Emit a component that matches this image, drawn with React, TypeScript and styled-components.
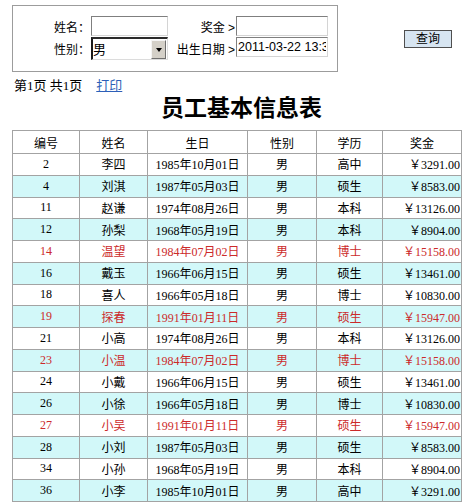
import React from "react";
import styled, { createGlobalStyle } from "styled-components";

const GlobalStyle = createGlobalStyle`
  html, body { margin: 0; padding: 0; background: #ffffff; }
  body { font-family: "Liberation Serif", "Noto Sans CJK SC", serif; color: #000; }
`;

const SANS = `"Liberation Sans", "Noto Sans CJK SC", sans-serif`;
const SERIF = `"Liberation Serif", "Noto Sans CJK SC", serif`;

const Page = styled.div`
  width: 474px;
  height: 504px;
  overflow: hidden;
`;

const TopBar = styled.div`
  display: flex;
  align-items: center;
  padding: 5px 0 0 12px;
`;

const SearchBox = styled.form`
  box-sizing: border-box;
  width: 326px;
  height: 67px;
  border: 1px solid #9c9c9c;
  padding: 10px 9px 0 0;
  display: grid;
  grid-template-columns: 78px 77px 68px 92px;
  grid-template-rows: 21px 23px;
  align-content: start;
  margin: 0;
`;

const Label = styled.label`
  font-family: ${SANS};
  font-size: 12px;
  display: flex;
  align-items: center;
  justify-content: flex-end;
  padding-right: 1px;
  white-space: nowrap;
`;

const TextInput = styled.input`
  box-sizing: border-box;
  width: 100%;
  height: 20px;
  margin: 0;
  padding: 0 1px;
  font-family: ${SANS};
  font-size: 12.5px;
  color: #000;
  background: #fff;
  border-style: solid;
  border-width: 1px;
  border-color: #7f7f7f #d4d4d4 #d4d4d4 #7f7f7f;
  outline: none;
  align-self: start;
`;

const SelectWrap = styled.div`
  box-sizing: border-box;
  width: 77px;
  height: 23px;
  display: flex;
  align-items: stretch;
  border-style: solid;
  border-width: 2px 1px 1px 2px;
  border-color: #2a2a2a #dcdcdc #dcdcdc #1a1a1a;
  background: #fff;
`;

const NativeSelect = styled.select`
  flex: 1;
  min-width: 0;
  appearance: none;
  -webkit-appearance: none;
  border: none;
  background: transparent;
  margin: 0;
  padding: 0;
  font-family: ${SANS};
  font-size: 13px;
  color: #000;
  outline: none;
`;

const ArrowButton = styled.span`
  box-sizing: border-box;
  width: 15px;
  margin: 1px 1px 0 0;
  background: #d4d0c8;
  border-style: solid;
  border-width: 1px;
  border-color: #f4f4f4 #6f6f6f #6f6f6f #f4f4f4;
  display: flex;
  align-items: center;
  justify-content: center;
  &::after {
    content: "";
    border-left: 3.5px solid transparent;
    border-right: 3.5px solid transparent;
    border-top: 4px solid #000;
  }
`;

const QueryButton = styled.button`
  box-sizing: border-box;
  width: 48px;
  height: 18px;
  margin: 0 0 0 66px;
  padding: 0;
  background: #d7e5f1;
  border: 1px solid #4f4f4f;
  font-family: ${SANS};
  font-size: 12px;
  line-height: 16px;
  color: #000;
`;

const Pager = styled.div`
  margin: 6px 0 0 14px;
  font-family: ${SERIF};
  font-size: 13px;
  line-height: 16px;
  white-space: pre;
`;

const PrintLink = styled.a`
  margin-left: 14px;
  color: #2d5fb8;
  text-decoration: underline;
`;

const Title = styled.h1`
  margin: 1px 0 9px 0;
  padding-left: 9px;
  text-align: center;
  font-family: ${SANS};
  font-size: 23px;
  font-weight: bold;
  line-height: 26px;
`;

const Table = styled.table`
  margin-left: 12px;
  width: 449px;
  border-collapse: collapse;
  table-layout: fixed;
  border: 1px solid #8c8c8c;
`;

const HeadCell = styled.th`
  height: 22px;
  padding: 0;
  border: 1px solid #a3a3a3;
  font-family: ${SANS};
  font-size: 12px;
  font-weight: normal;
  text-align: center;
  background: #fff;
`;

const Row = styled.tr<{ $alt: boolean; $warn: boolean }>`
  height: 21.75px;
  background: ${(p) => (p.$alt ? "#d2f8f9" : "#ffffff")};
  color: ${(p) => (p.$warn ? "#cc2a2a" : "#000")};
`;

const Cell = styled.td<{ $right?: boolean }>`
  padding: 0 ${(p) => (p.$right ? "1px" : "0")} 0 0;
  border: 1px solid #a3a3a3;
  font-family: ${SERIF};
  font-size: 12px;
  text-align: ${(p) => (p.$right ? "right" : "center")};
  white-space: nowrap;
  overflow: hidden;
`;

type Emp = [number, string, string, string, string, string, boolean];

const data: Emp[] = [
  [2, "李四", "1985年10月01日", "男", "高中", "3291.00", false],
  [4, "刘淇", "1987年05月03日", "男", "硕生", "8583.00", false],
  [11, "赵谦", "1974年08月26日", "男", "本科", "13126.00", false],
  [12, "孙梨", "1968年05月19日", "男", "本科", "8904.00", false],
  [14, "温望", "1984年07月02日", "男", "博士", "15158.00", true],
  [16, "戴玉", "1966年06月15日", "男", "硕生", "13461.00", false],
  [18, "喜人", "1966年05月18日", "男", "博士", "10830.00", false],
  [19, "探春", "1991年01月11日", "男", "硕生", "15947.00", true],
  [21, "小高", "1974年08月26日", "男", "本科", "13126.00", false],
  [23, "小温", "1984年07月02日", "男", "博士", "15158.00", true],
  [24, "小戴", "1966年06月15日", "男", "硕生", "13461.00", false],
  [26, "小徐", "1966年05月18日", "男", "博士", "10830.00", false],
  [27, "小吴", "1991年01月11日", "男", "硕生", "15947.00", true],
  [28, "小刘", "1987年05月03日", "男", "硕生", "8583.00", false],
  [34, "小孙", "1968年05月19日", "男", "本科", "8904.00", false],
  [36, "小李", "1985年10月01日", "男", "高中", "3291.00", false],
];

const colWidths = [67, 68, 100, 69, 66, 79];
const headers = ["编号", "姓名", "生日", "性别", "学历", "奖金"];

export default function App() {
  return (
    <Page>
      <GlobalStyle />
      <TopBar>
        <SearchBox onSubmit={(e) => e.preventDefault()}>
          <Label htmlFor="name">姓名：</Label>
          <TextInput id="name" />
          <Label htmlFor="bonus">奖金 &gt;</Label>
          <TextInput id="bonus" />
          <Label htmlFor="sex">性别：</Label>
          <SelectWrap>
            <NativeSelect id="sex" defaultValue="男">
              <option value="男">男</option>
              <option value="女">女</option>
            </NativeSelect>
            <ArrowButton />
          </SelectWrap>
          <Label htmlFor="birth">出生日期 &gt;</Label>
          <TextInput id="birth" defaultValue="2011-03-22 13:37" />
        </SearchBox>
        <QueryButton type="button">查询</QueryButton>
      </TopBar>
      <Pager>
        第1页 共1页<PrintLink href="#">打印</PrintLink>
      </Pager>
      <Title>员工基本信息表</Title>
      <Table>
        <colgroup>
          {colWidths.map((w, i) => (
            <col key={i} style={{ width: w }} />
          ))}
        </colgroup>
        <thead>
          <tr>
            {headers.map((h) => (
              <HeadCell key={h}>{h}</HeadCell>
            ))}
          </tr>
        </thead>
        <tbody>
          {data.map((r, i) => (
            <Row key={r[0]} $alt={i % 2 === 1} $warn={r[6]}>
              <Cell>{r[0]}</Cell>
              <Cell>{r[1]}</Cell>
              <Cell>{r[2]}</Cell>
              <Cell>{r[3]}</Cell>
              <Cell>{r[4]}</Cell>
              <Cell $right>￥{r[5]}</Cell>
            </Row>
          ))}
        </tbody>
      </Table>
    </Page>
  );
}
